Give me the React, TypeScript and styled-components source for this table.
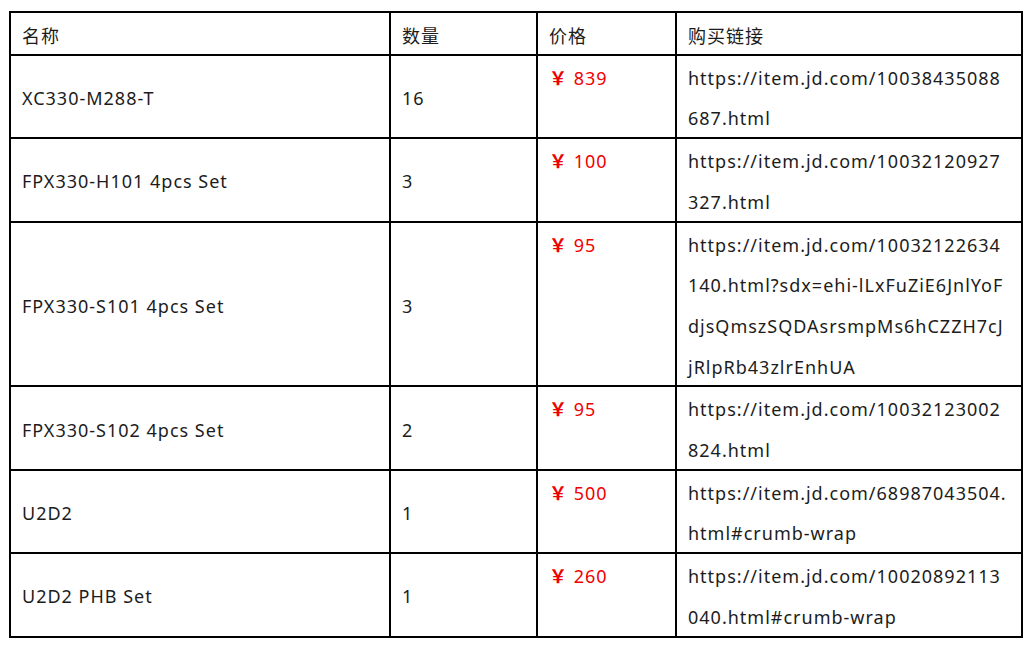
import styled, { createGlobalStyle } from "styled-components";

type Item = {
  name: string;
  count: string;
  price: string;
  link: string;
};

const items: Item[] = [
  {
    name: "XC330-M288-T",
    count: "16",
    price: "839",
    link: "https://item.jd.com/10038435088687.html",
  },
  {
    name: "FPX330-H101 4pcs Set",
    count: "3",
    price: "100",
    link: "https://item.jd.com/10032120927327.html",
  },
  {
    name: "FPX330-S101 4pcs Set",
    count: "3",
    price: "95",
    link: "https://item.jd.com/10032122634140.html?sdx=ehi-lLxFuZiE6JnlYoFdjsQmszSQDAsrsmpMs6hCZZH7cJjRlpRb43zlrEnhUA",
  },
  {
    name: "FPX330-S102 4pcs Set",
    count: "2",
    price: "95",
    link: "https://item.jd.com/10032123002824.html",
  },
  {
    name: "U2D2",
    count: "1",
    price: "500",
    link: "https://item.jd.com/68987043504.html#crumb-wrap",
  },
  {
    name: "U2D2 PHB Set",
    count: "1",
    price: "260",
    link: "https://item.jd.com/10020892113040.html#crumb-wrap",
  },
];

export default function App() {
  return (
    <>
      <GlobalStyle />
      <Page>
        <Table>
          <colgroup>
            <col style={{ width: 380 }} />
            <col style={{ width: 147 }} />
            <col style={{ width: 139 }} />
            <col style={{ width: 346 }} />
          </colgroup>
          <thead>
            <tr>
              <HeadCell>
                <Text>名称</Text>
              </HeadCell>
              <HeadCell>
                <Text>数量</Text>
              </HeadCell>
              <HeadCell>
                <Text>价格</Text>
              </HeadCell>
              <HeadCell>
                <Text>购买链接</Text>
              </HeadCell>
            </tr>
          </thead>
          <tbody>
            {items.map((item) => (
              <tr key={item.link}>
                <Cell>
                  <Text>{item.name}</Text>
                </Cell>
                <Cell>
                  <Text>{item.count}</Text>
                </Cell>
                <Cell $top>
                  <Price>
                    <Yen>￥</Yen> {item.price}
                  </Price>
                </Cell>
                <LinkCell $top>
                  <Text>{item.link}</Text>
                </LinkCell>
              </tr>
            ))}
          </tbody>
        </Table>
      </Page>
    </>
  );
}

const GlobalStyle = createGlobalStyle`
  html, body {
    margin: 0;
    padding: 0;
    background: #ffffff;
  }

  body {
    font-family: "Noto Sans", "Noto Sans CJK SC", sans-serif;
    color: #1c1c1c;
  }
`;

const Page = styled.div`
  padding: 11px 0 0 9px;
`;

const Table = styled.table`
  width: 1012px;
  table-layout: fixed;
  border-collapse: collapse;
  font-size: 18px;
  line-height: 40.7px;
  letter-spacing: 1px;
`;

const Cell = styled.td<{ $top?: boolean }>`
  border: 2px solid #000;
  padding: 0 10px 0 11px;
  vertical-align: ${(p) => (p.$top ? "top" : "middle")};
`;

const HeadCell = styled.th`
  border: 2px solid #000;
  padding: 0 10px 0 11px;
  text-align: left;
  font-weight: 400;
  font-family: "Noto Sans CJK SC", sans-serif;
`;

const LinkCell = styled(Cell)`
  padding-right: 14px;
  word-break: break-all;
`;

// the reference font sits a little lower in its line box
const Text = styled.span`
  line-height: 1;
  vertical-align: -2px;
`;

const Price = styled(Text)`
  color: #f00000;
`;

const Yen = styled.span`
  font-family: "Noto Sans CJK SC", sans-serif;
  font-weight: 700;
`;
